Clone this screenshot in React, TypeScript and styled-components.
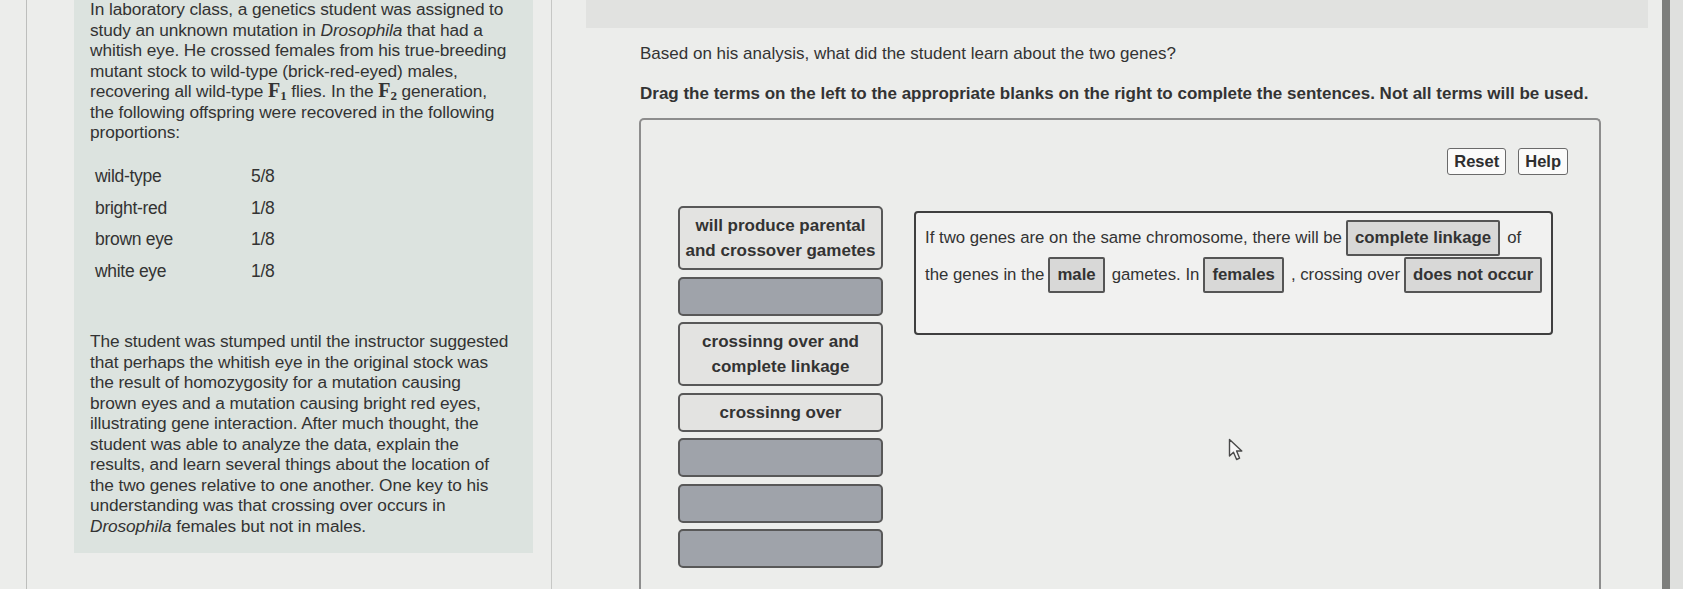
import React from 'react';
import styled, { createGlobalStyle } from 'styled-components';

const GlobalStyle = createGlobalStyle`
  * {
    box-sizing: border-box;
  }
  body {
    margin: 0;
    background: #ecedeb;
  }
`;

const Page = styled.div`
  display: flex;
  height: 589px;
  overflow: hidden;
  background: #ecedeb;
  font-family: 'Liberation Sans', Arial, sans-serif;
  color: #353535;
`;

const Gutter = styled.div`
  flex: none;
  width: 27px;
  border-right: 1px solid #bdbebc;
`;

const StoryPanel = styled.section`
  flex: none;
  width: 459px;
  height: 553px;
  margin-left: 47px;
  padding: 0 8px 0 16px;
  background: #dce3df;
  overflow: hidden;
`;

const StoryText = styled.p<{ $top?: number }>`
  margin: ${(p) => p.$top ?? 0}px 0 0;
  font-size: 17.3px;
  line-height: 20.5px;
  letter-spacing: -0.1px;
  white-space: nowrap;
  color: #333;
`;

const Gen = styled.span`
  font-family: 'Liberation Serif', 'Times New Roman', serif;
  font-size: 20px;
  font-weight: bold;
  line-height: 0;
  sub {
    font-size: 13px;
    line-height: 0;
    vertical-align: -3px;
  }
`;

const Ratios = styled.div`
  display: grid;
  grid-template-columns: 156px auto;
  grid-auto-rows: 31.7px;
  align-items: center;
  margin-top: 18px;
  padding-left: 5px;
  font-size: 17.5px;
  letter-spacing: -0.3px;
  color: #333;
`;

const Main = styled.main`
  position: relative;
  flex: 1;
  display: flex;
  flex-direction: column;
  height: 589px;
  margin-left: 18px;
  border-left: 1px solid #c6c7c5;
`;

const TopBand = styled.div`
  flex: none;
  width: 1062px;
  height: 28px;
  margin-left: 34px;
  background: #e1e2e0;
`;

const Prompt = styled.p<{ $bold?: boolean; $top: number }>`
  margin: ${(p) => p.$top}px 0 0 88px;
  font-size: 17px;
  line-height: 20px;
  font-weight: ${(p) => (p.$bold ? 'bold' : 'normal')};
  color: #333;
  white-space: nowrap;
`;

const Workspace = styled.div`
  flex: 1;
  width: 962px;
  margin: 14px 0 0 87px;
  padding: 28px 31px 0 37px;
  border: 2px solid #8d8d8d;
  border-bottom: none;
  border-radius: 5px 5px 0 0;
`;

const Toolbar = styled.div`
  display: flex;
  justify-content: flex-end;
  gap: 12px;
`;

const ToolButton = styled.button`
  height: 27px;
  padding: 0 6px;
  background: #fbfbfa;
  border: 1.5px solid #6a6a6a;
  border-radius: 3px;
  font-family: inherit;
  font-size: 16.5px;
  font-weight: bold;
  color: #2e2e2e;
`;

const Board = styled.div`
  display: flex;
  align-items: flex-start;
  gap: 31px;
  margin-top: 31px;
`;

const TermList = styled.div`
  display: flex;
  flex-direction: column;
  gap: 6.5px;
  width: 205px;
`;

const Term = styled.div<{ $empty?: boolean; $tall?: boolean }>`
  display: flex;
  align-items: center;
  justify-content: center;
  height: ${(p) => (p.$tall ? 64 : 39)}px;
  padding: 0 4px;
  border: 2px solid #585858;
  border-radius: 5px;
  background: ${(p) => (p.$empty ? '#9fa3aa' : '#e3e3e1')};
  font-size: 17px;
  font-weight: bold;
  line-height: 25px;
  text-align: center;
  white-space: nowrap;
  color: #333;
`;

const SentenceBox = styled.div`
  width: 639px;
  min-height: 124px;
  margin-top: 5px;
  padding: 6px 6px 0 9px;
  border: 2px solid #3f3f3f;
  border-radius: 4px;
  background: #f1f1f0;
`;

const SentenceLine = styled.div`
  display: flex;
  align-items: center;
  height: 37px;
  font-size: 16.8px;
  color: #333;
  white-space: pre;
`;

const Blank = styled.span`
  display: inline-flex;
  align-items: center;
  height: 36px;
  margin: 0 7px 0 4px;
  padding: 0 7px;
  border: 2px solid #555;
  border-radius: 2px;
  background: #d8d8d7;
  font-weight: bold;
  color: #333;
`;

const Pointer = styled.svg`
  position: absolute;
  left: 676px;
  top: 438px;
`;

const EdgeBar = styled.div`
  flex: none;
  width: 8px;
  background: #7d7e7c;
`;

const EdgeTail = styled.div`
  flex: none;
  width: 13px;
  background: #dfe0de;
`;

const ratios = [
  ['wild-type', '5/8'],
  ['bright-red', '1/8'],
  ['brown eye', '1/8'],
  ['white eye', '1/8'],
];

export default function App() {
  return (
    <Page>
      <GlobalStyle />
      <Gutter />
      <StoryPanel>
        <StoryText $top={-1}>
          In laboratory class, a genetics student was assigned to
          <br />
          study an unknown mutation in <i>Drosophila</i> that had a
          <br />
          whitish eye. He crossed females from his true-breeding
          <br />
          mutant stock to wild-type (brick-red-eyed) males,
          <br />
          recovering all wild-type <Gen>F<sub>1</sub></Gen> flies. In the <Gen>F<sub>2</sub></Gen> generation,
          <br />
          the following offspring were recovered in the following
          <br />
          proportions:
        </StoryText>
        <Ratios>
          {ratios.map(([name, frac]) => (
            <React.Fragment key={name}>
              <span>{name}</span>
              <span>{frac}</span>
            </React.Fragment>
          ))}
        </Ratios>
        <StoryText $top={44}>
          The student was stumped until the instructor suggested
          <br />
          that perhaps the whitish eye in the original stock was
          <br />
          the result of homozygosity for a mutation causing
          <br />
          brown eyes and a mutation causing bright red eyes,
          <br />
          illustrating gene interaction. After much thought, the
          <br />
          student was able to analyze the data, explain the
          <br />
          results, and learn several things about the location of
          <br />
          the two genes relative to one another. One key to his
          <br />
          understanding was that crossing over occurs in
          <br />
          <i>Drosophila</i> females but not in males.
        </StoryText>
      </StoryPanel>
      <Main>
        <TopBand />
        <Prompt $top={16}>Based on his analysis, what did the student learn about the two genes?</Prompt>
        <Prompt $top={20} $bold>
          Drag the terms on the left to the appropriate blanks on the right to complete the sentences. Not all terms will be used.
        </Prompt>
        <Workspace>
          <Toolbar>
            <ToolButton>Reset</ToolButton>
            <ToolButton>Help</ToolButton>
          </Toolbar>
          <Board>
            <TermList>
              <Term $tall>
                will produce parental
                <br />
                and crossover gametes
              </Term>
              <Term $empty />
              <Term $tall>
                crossinng over and
                <br />
                complete linkage
              </Term>
              <Term>crossinng over</Term>
              <Term $empty />
              <Term $empty />
              <Term $empty />
            </TermList>
            <SentenceBox>
              <SentenceLine>
                If two genes are on the same chromosome, there will be<Blank>complete linkage</Blank>of
              </SentenceLine>
              <SentenceLine>
                the genes in the<Blank>male</Blank>gametes. In<Blank>females</Blank>, crossing over<Blank>does not occur</Blank>
              </SentenceLine>
            </SentenceBox>
          </Board>
        </Workspace>
        <Pointer width="16" height="25" viewBox="0 0 16 25">
          <path
            d="M1.5 1.5 L1.5 18 L5.5 14.2 L8.6 21.5 L11.6 20.2 L8.6 13 L13.8 13 Z"
            fill="#f7f7f7"
            stroke="#4a4a4a"
            strokeWidth="1.4"
            strokeLinejoin="round"
          />
        </Pointer>
      </Main>
      <EdgeBar />
      <EdgeTail />
    </Page>
  );
}
